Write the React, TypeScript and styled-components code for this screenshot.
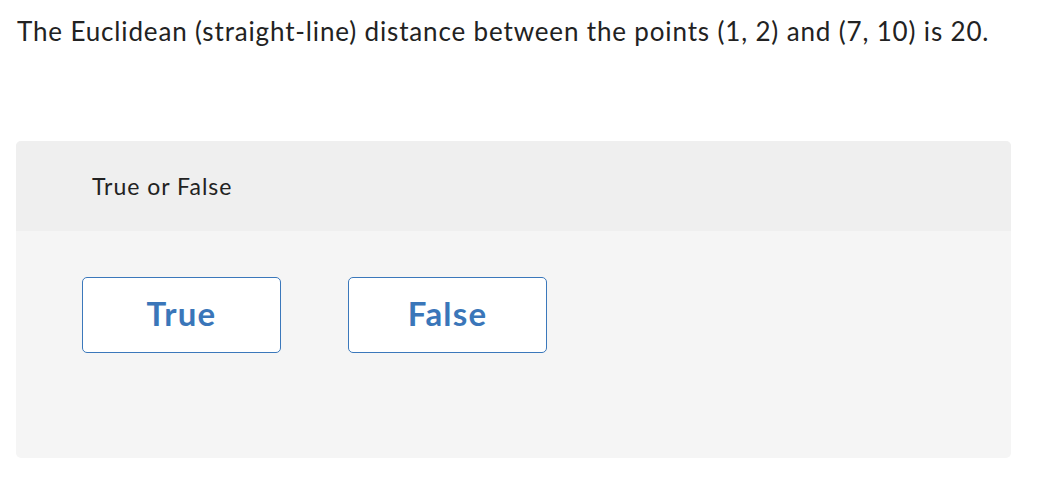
import * as React from "react";
import styled, { createGlobalStyle } from "styled-components";

const GlobalStyle = createGlobalStyle`
  html, body {
    margin: 0;
    padding: 0;
    background: #ffffff;
  }
  body {
    font-family: Lato, "Noto Sans", sans-serif;
    color: #222222;
  }
`;

const SPage = styled.div`
  padding: 12px 29px 0 16px;
  width: 1040px;
  box-sizing: border-box;
`;

const SQuestion = styled.p`
  margin: 0 0 0 1px;
  font-size: 26px;
  line-height: 38px;
  color: #222222;
  letter-spacing: 0.85px;
  white-space: nowrap;
`;

const SCard = styled.div`
  margin-top: 91px;
  height: 317px;
  border-radius: 5px;
  overflow: hidden;
  background: #f5f5f5;
  display: flex;
  flex-direction: column;
`;

const SCardHeader = styled.div`
  height: 90px;
  background: #efefef;
  display: flex;
  align-items: center;
  padding-left: 76px;
  font-size: 23px;
  letter-spacing: 1px;
  color: #222222;
`;

const SChoices = styled.div`
  display: flex;
  gap: 67px;
  padding: 46px 0 0 66px;
`;

const SChoice = styled.button`
  width: 199px;
  height: 76px;
  box-sizing: border-box;
  background: #ffffff;
  border: 1px solid #3b78bb;
  border-radius: 5px;
  font-family: Lato, "Noto Sans", sans-serif;
  font-weight: 700;
  font-size: 33px;
  letter-spacing: 1.2px;
  color: #3a76b9;
  cursor: pointer;
  padding: 0 0 4px 0;
`;

const App = () => {
  const choices = ["True", "False"];
  return (
    <SPage>
      <GlobalStyle />
      <SQuestion>
        {"The Euclidean (straight-line) distance between the points (1, 2) and (7, 10) is 20."}
      </SQuestion>
      <SCard>
        <SCardHeader>{"True or False"}</SCardHeader>
        <SChoices>
          {choices.map(c => (
            <SChoice key={c}>{c}</SChoice>
          ))}
        </SChoices>
      </SCard>
    </SPage>
  );
};

export default App;
